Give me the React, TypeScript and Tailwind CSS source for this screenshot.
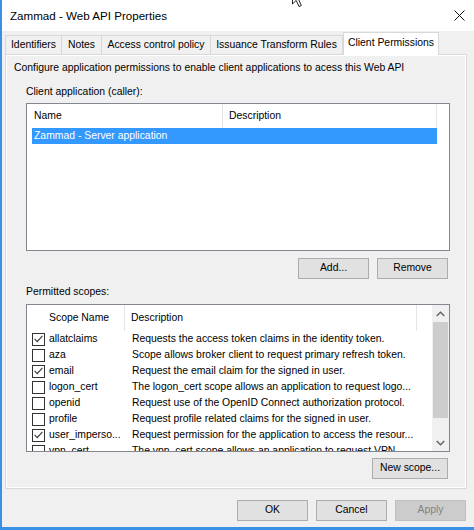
import React from "react";

const Check = ({ on }: { on: boolean }) => (
  <span className="w-[13px] h-[13px] border border-[#333333] bg-white flex items-center justify-center shrink-0">
    {on && (
      <svg width="9" height="8" viewBox="0 0 9 8">
        <path d="M0.6 3.9 L3.2 6.6 L8.4 0.8" fill="none" stroke="#333333" strokeWidth="1.1" />
      </svg>
    )}
  </span>
);

const Btn = ({ label, w, disabled }: { label: string; w: string; disabled?: boolean }) => (
  <div
    className={
      disabled
        ? `${w} h-[21px] flex items-center justify-center border border-[#bfbfbf] bg-[#cccccc] text-[#838383]`
        : `${w} h-[21px] flex items-center justify-center border border-[#adadad] bg-[#e1e1e1] text-black`
    }
  >
    {label}
  </div>
);

const scopes: [boolean, string, string][] = [
  [true, "allatclaims", "Requests the access token claims in the identity token."],
  [false, "aza", "Scope allows broker client to request primary refresh token."],
  [true, "email", "Request the email claim for the signed in user."],
  [false, "logon_cert", "The logon_cert scope allows an application to request logo..."],
  [false, "openid", "Request use of the OpenID Connect authorization protocol."],
  [false, "profile", "Request profile related claims for the signed in user."],
  [true, "user_imperso...", "Request permission for the application to access the resour..."],
  [false, "vpn_cert", "The vpn_cert scope allows an application to request VPN ..."],
];

export default function App() {
  return (
    <div className="w-[474px] h-[530px] bg-[#f0f0f0] border-l-2 border-l-[#3b8fe4] border-b-[3px] border-b-[#3b8fe4] relative overflow-hidden flex flex-col font-['Liberation_Sans',Arial,sans-serif] text-[10.4px] text-black leading-none">
      {/* mouse cursor */}
      <svg className="absolute left-[290px] top-[-12px] z-20" width="13" height="20" viewBox="0 0 13 20">
        <path d="M0.5 0.5 L0.5 16 L4.2 12.4 L7 18.6 L9.3 17.6 L6.6 11.5 L11.5 11.5 Z" fill="white" stroke="#222" strokeWidth="1" />
      </svg>

      {/* title bar */}
      <div className="h-[31px] bg-white flex items-center justify-between pl-[8px] pr-[9px] shrink-0">
        <span className="text-[11.6px] text-black">Zammad - Web API Properties</span>
        <svg width="11" height="11" viewBox="0 0 11 11">
          <path d="M0.5 0.5 L10.5 10.5 M10.5 0.5 L0.5 10.5" stroke="#111" strokeWidth="1" />
        </svg>
      </div>

      {/* tabs */}
      <div className="h-[23px] flex items-end ml-[3px] relative z-10 shrink-0">
        <div className="w-[57px] h-[19px] border border-b-0 border-[#d9d9d9] bg-[#f0f0f0] flex items-center justify-center">Identifiers</div>
        <div className="w-[40px] h-[19px] border border-b-0 border-l-0 border-[#d9d9d9] bg-[#f0f0f0] flex items-center justify-center">Notes</div>
        <div className="w-[109px] h-[19px] border border-b-0 border-l-0 border-[#d9d9d9] bg-[#f0f0f0] flex items-center justify-center">Access control policy</div>
        <div className="w-[132px] h-[19px] border border-b-0 border-l-0 border-[#d9d9d9] bg-[#f0f0f0] flex items-center justify-center">Issuance Transform Rules</div>
        <div className="w-[96px] h-[23px] relative top-[1px] border border-b-0 border-[#d9d9d9] bg-white flex items-center justify-center pb-[2px]">Client Permissions</div>
      </div>

      {/* panel */}
      <div className="ml-[3px] w-[462px] border border-[#d9d9d9] shadow-[inset_0_0_0_1px_#ffffff] bg-[#f0f0f0] flex flex-col pl-[8px] pt-[6px] pb-[8px] shrink-0">
        <div className="h-[14px] flex items-center">Configure application permissions to enable client applications to acess this Web API</div>

        <div className="ml-[12px] w-[424px] flex flex-col">
          <div className="h-[14px] flex items-center mt-[10px]">Client application (caller):</div>

          {/* client list */}
          <div className="mt-[4px] h-[148px] border border-[#828790] bg-white flex flex-col">
            <div className="h-[24px] flex shrink-0">
              <div className="w-[196px] pl-[7px] border-r border-[#e5e5e5] flex items-center">Name</div>
              <div className="w-[214px] pl-[6px] border-r border-[#e5e5e5] flex items-center">Description</div>
            </div>
            <div className="ml-[5px] w-[405px] h-[16px] bg-[#3399ff] text-white flex items-center pl-[2px]">Zammad - Server application</div>
          </div>

          <div className="mt-[7px] h-[22px] flex justify-end gap-[8px] pr-[2px]">
            <Btn label="Add..." w="w-[71px]" />
            <Btn label="Remove" w="w-[71px]" />
          </div>

          <div className="h-[14px] flex items-center mt-[5px]">Permitted scopes:</div>

          {/* scopes list */}
          <div className="mt-[5px] h-[148px] border border-[#828790] bg-white flex overflow-hidden">
            <div className="flex-1 flex flex-col overflow-hidden">
              <div className="h-[26px] flex shrink-0">
                <div className="w-[98px] pl-[22px] border-r border-[#e5e5e5] flex items-center">Scope Name</div>
                <div className="w-[292px] pl-[6px] border-r border-[#e5e5e5] flex items-center">Description</div>
              </div>
              {scopes.map(([on, name, desc]) => (
                <div key={name} className="h-[16px] flex items-center shrink-0 whitespace-nowrap">
                  <div className="w-[98px] pl-[5px] flex items-center">
                    <Check on={on} />
                    <span className="ml-[4px]">{name}</span>
                  </div>
                  <div className="pl-[7px]">{desc}</div>
                </div>
              ))}
            </div>
            {/* scrollbar */}
            <div className="w-[17px] bg-[#f0f0f0] flex flex-col shrink-0">
              <div className="h-[17px] flex items-center justify-center">
                <svg width="9" height="6" viewBox="0 0 9 6">
                  <path d="M0.7 5 L4.5 1.2 L8.3 5" fill="none" stroke="#606060" strokeWidth="1.3" />
                </svg>
              </div>
              <div className="mx-[1px] h-[96px] bg-[#cdcdcd]" />
              <div className="flex-1" />
              <div className="h-[17px] flex items-center justify-center">
                <svg width="9" height="6" viewBox="0 0 9 6">
                  <path d="M0.7 1 L4.5 4.8 L8.3 1" fill="none" stroke="#606060" strokeWidth="1.3" />
                </svg>
              </div>
            </div>
          </div>

          <div className="mt-[6px] h-[22px] flex justify-end pr-[2px]">
            <Btn label="New scope..." w="w-[76px]" />
          </div>
        </div>
      </div>

      {/* bottom buttons */}
      <div className="mt-[11px] flex justify-end gap-[8px] pr-[8px]">
        <Btn label="OK" w="w-[71px]" />
        <Btn label="Cancel" w="w-[71px]" />
        <Btn label="Apply" w="w-[71px]" disabled />
      </div>
    </div>
  );
}
